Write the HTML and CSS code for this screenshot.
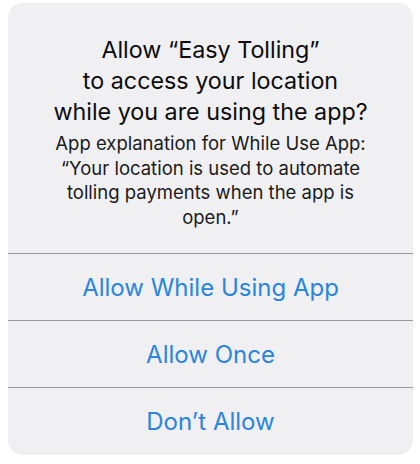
FILE: index.html
```html
<!DOCTYPE html>
<html lang="en">
<head>
  <meta charset="UTF-8" />
  <meta name="viewport" content="width=device-width, initial-scale=1.0"/>
  <title>Location Permission</title>
  <link rel="stylesheet" href="styles.css">
</head>
<body>
  <div class="alert">
    <div class="alert-body">
      <h1 class="alert-title">Allow “Easy Tolling”<br>to access your location<br>while you are using the app?</h1>
      <p class="alert-message">App explanation for While Use App:<br>“Your location is used to automate<br>tolling payments when the app is<br>open.”</p>
    </div>
    <div class="alert-actions">
      <button class="alert-btn">Allow While Using App</button>
      <button class="alert-btn">Allow Once</button>
      <button class="alert-btn">Don’t Allow</button>
    </div>
  </div>
</body>
</html>
```

FILE: styles.css
```css
* {
  box-sizing: border-box;
  margin: 0;
  padding: 0;
}

body {
  font-family: Inter, 'Liberation Sans', Arial, sans-serif;
  background: #fff;
  color: #111;
}

.alert {
  width: 405px;
  height: 452px;
  margin: 3px 0 0 8px;
  background: #f0f0f3;
  border-radius: 15px;
  overflow: hidden;
  display: flex;
  flex-direction: column;
}

.alert-body {
  height: 250px;
  padding-top: 31px;
  text-align: center;
}

.alert-title {
  font-size: 23.3px;
  font-weight: normal;
  line-height: 31px;
  color: #0c0c0c;
}

.alert-message {
  margin-top: 4px;
  font-size: 18.5px;
  line-height: 24.5px;
  color: #1a1a1a;
}

.alert-actions {
  flex: 1;
  display: flex;
  flex-direction: column;
}

.alert-btn {
  height: 67px;
  border: none;
  border-top: 1px solid #9a9a9e;
  background: transparent;
  font-family: inherit;
  font-size: 24px;
  color: #2a85dc;
  cursor: pointer;
}

.alert-btn:last-child {
  flex: 1;
}
```
